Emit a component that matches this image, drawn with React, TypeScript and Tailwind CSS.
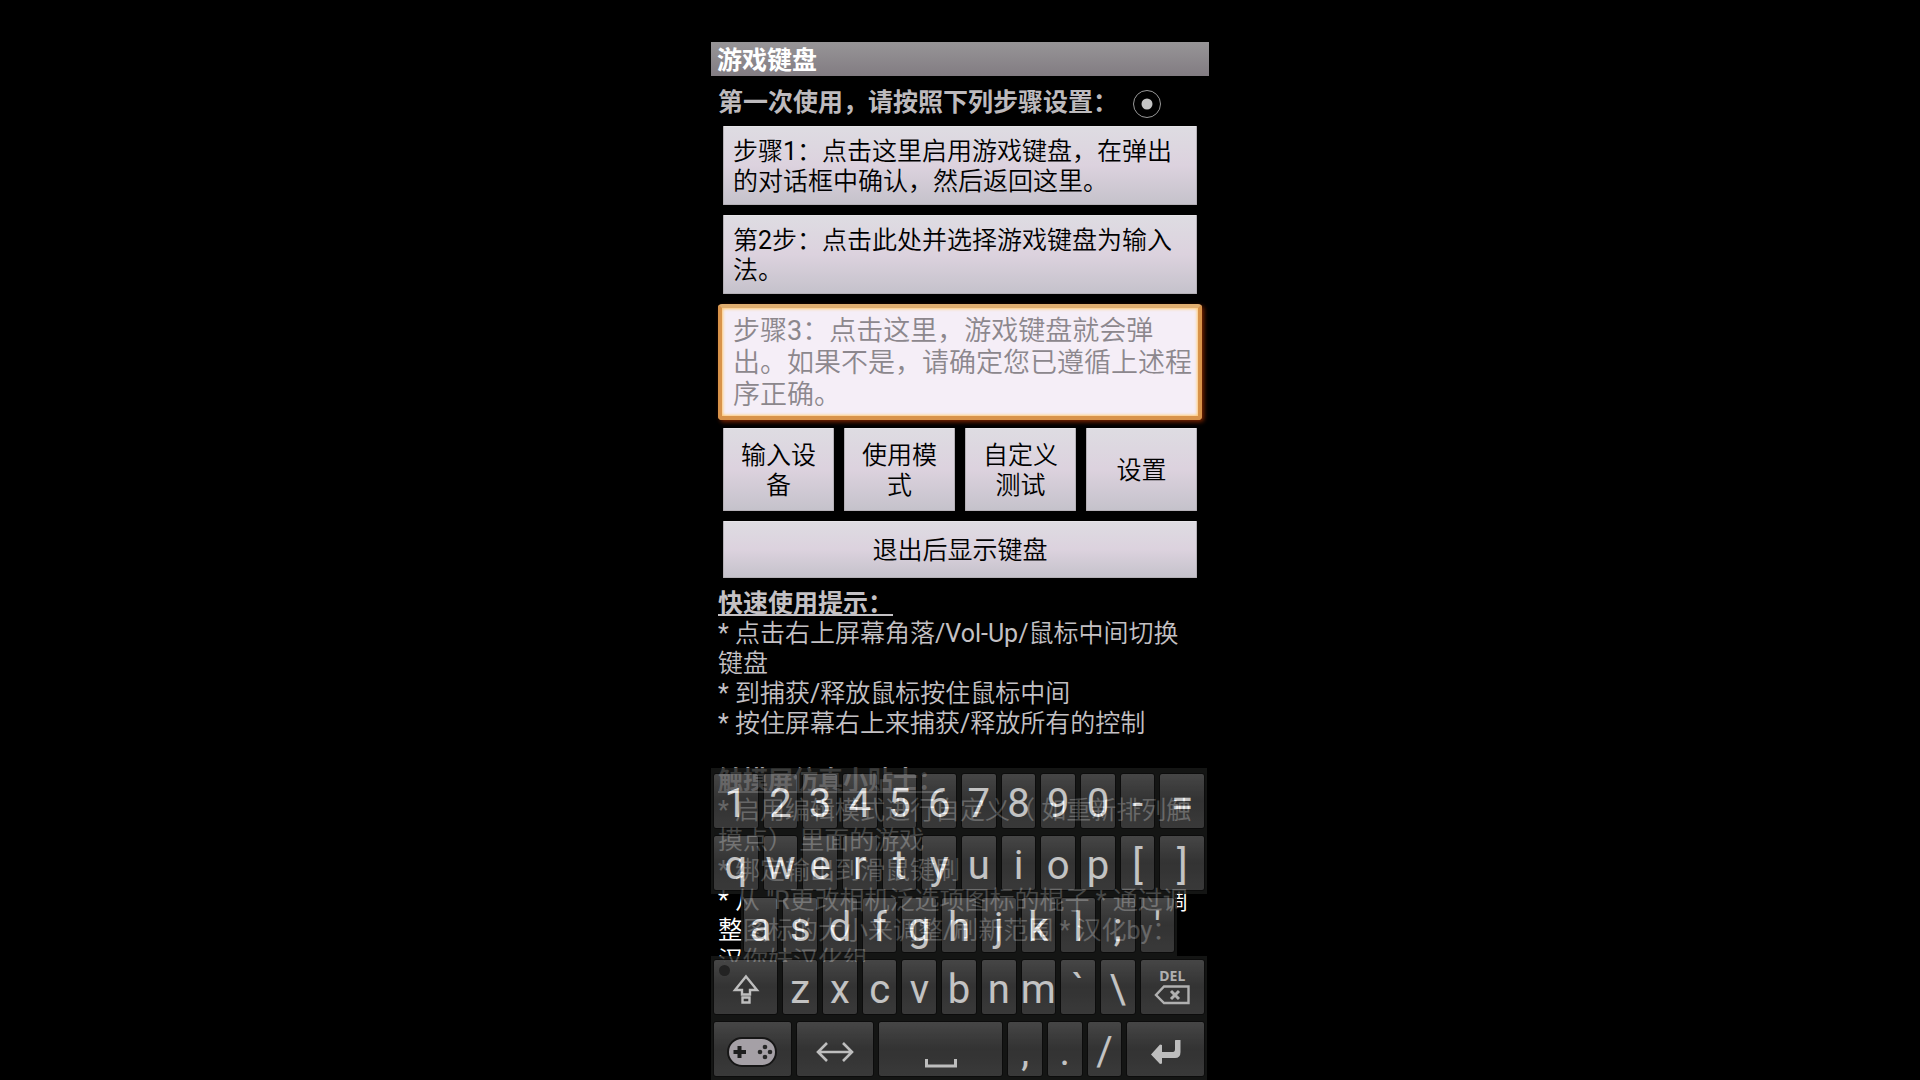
import { ReactNode } from 'react';

const FACE = "font-['Roboto','Noto_Sans_CJK_SC_DemiLight','Noto_Sans_CJK_SC',sans-serif]";
const HEADING = "font-['Roboto','Noto_Sans_CJK_SC',sans-serif] font-bold";

const PANEL_BUTTON =
  'rounded-[1px] border border-[#b4b0b6] border-t-[#e6e4e8] bg-linear-to-b from-[#dedce2] via-[#dcd2de] to-[#c5c2cb] px-[9px] pt-[3px] text-[25px] leading-[30px] text-black';

const DIGITS = '1234567890-='.split('');
const TOP_ROW = 'qwertyuiop[]'.split('');
const HOME_ROW = "asdfghjkl;'".split('');
const BOTTOM_ROW = 'zxcvbnm`\\'.split('');
const PUNCTUATION = [',', '.', '/'];

function Key({ label, children }: { label?: string; children: ReactNode }) {
  return (
    <button
      type="button"
      aria-label={label}
      className="relative mx-[2px] flex h-[56px] min-w-0 items-center justify-center rounded-[3px] border border-[#101010] bg-linear-to-b from-[#585858] via-[#404040] to-[#484848] pt-[5px] text-[40px] leading-[48px] text-[#f4f4f4]"
    >
      {children}
    </button>
  );
}

function ShiftIcon() {
  return (
    <svg width="28" height="32" viewBox="0 0 28 32" fill="none" stroke="#eee" strokeWidth="2.400">
      <path d="M14 2.500 L25 16 H18 V20.500 H10 V16 H3 Z" />
      <path d="M10.500 23.500 H17.500 V28.500 H10.500 Z" />
    </svg>
  );
}

function GamepadIcon() {
  return (
    <svg width="50" height="30" viewBox="0 0 50 30">
      <rect x="1" y="1" width="48" height="28" rx="14" fill="#cfc9d0" stroke="#1c1c1c" strokeWidth="2" />
      <path d="M10.500 9 H14.500 V13 H19 V17 H14.500 V21 H10.500 V17 H6.500 V13 H10.500 Z" fill="#262626" />
      <circle cx="38" cy="10" r="2.300" fill="#333" />
      <circle cx="38" cy="20" r="2.300" fill="#333" />
      <circle cx="33" cy="15" r="2.300" fill="#333" />
      <circle cx="43" cy="15" r="2.300" fill="#333" />
    </svg>
  );
}

function ArrowsIcon() {
  return (
    <svg width="38" height="20" viewBox="0 0 38 20" fill="none" stroke="#eee" strokeWidth="2.600">
      <path d="M2 10 H36 M11 1 L2 10 L11 19 M27 1 L36 10 L27 19" />
    </svg>
  );
}

function SpaceIcon() {
  return (
    <svg className="mt-[24px]" width="32" height="9" viewBox="0 0 32 9" fill="none" stroke="#eee" strokeWidth="3">
      <path d="M1.500 0 V7 H30.500 V0" />
    </svg>
  );
}

function DeleteIcon() {
  return (
    <svg width="36" height="20" viewBox="0 0 36 20" fill="none" stroke="#ddd" strokeWidth="2.400">
      <path d="M10 1.500 H34.500 V18 H10 L2 10 Z" />
      <path d="M17 6 L25 14 M25 6 L17 14" strokeWidth="3" />
    </svg>
  );
}

function EnterIcon() {
  return (
    <svg width="32" height="28" viewBox="0 0 32 28">
      <path d="M25.500 2 H30.500 V14 Q30.500 20 25 20 H12 V25.500 L10 26 L1 16.500 L10 6.500 L12 7 V14 H23 Q25 14 25 11 V2.500 Z" fill="#eee" />
    </svg>
  );
}

function Keyboard() {
  return (
    <div className="absolute bottom-0 left-0 w-[496px] opacity-80">
      <div className="grid grid-cols-[5fr_repeat(10,4fr)_5fr] bg-[#1a1b1a] pt-[5px] pb-[3px]">
        {DIGITS.map(c => <Key key={c}>{c}</Key>)}
      </div>
      <div className="grid grid-cols-[5fr_repeat(10,4fr)_5fr] bg-[#1a1b1a] py-[3px]">
        {TOP_ROW.map(c => <Key key={c}>{c}</Key>)}
      </div>
      <div className="mx-[6%] grid grid-cols-[repeat(11,4fr)] bg-[#1a1b1a] py-[3px]">
        {HOME_ROW.map(c => <Key key={c}>{c}</Key>)}
      </div>
      <div className="grid grid-cols-[7fr_repeat(9,4fr)_7fr] bg-[#1a1b1a] py-[3px]">
        <Key label="Shift">
          <span className="absolute top-[5px] left-[5px] size-[11px] rounded-full bg-[#2c2c2c]" />
          <ShiftIcon />
        </Key>
        {BOTTOM_ROW.map(c => <Key key={c}>{c}</Key>)}
        <Key label="Delete">
          <span className="flex flex-col items-center gap-[2px] pb-[6px]">
            <span className="font-['Noto_Sans',sans-serif] text-[14px] leading-[14px] font-bold text-[#ddd]">DEL</span>
            <DeleteIcon />
          </span>
        </Key>
      </div>
      <div className="grid grid-cols-[25fr_25fr_39fr_12fr_12fr_12fr_25fr] bg-[#1a1b1a] py-[3px]">
        <Key label="Gamepad"><GamepadIcon /></Key>
        <Key label="Arrows"><ArrowsIcon /></Key>
        <Key label="Space"><SpaceIcon /></Key>
        {PUNCTUATION.map(c => <Key key={c}>{c}</Key>)}
        <Key label="Enter"><EnterIcon /></Key>
      </div>
    </div>
  );
}

function Tips() {
  return (
    <div className="px-[7px] pt-[11px] text-[25px] leading-[30px] text-[#c4c1c4]">
      <h2 className={`underline ${HEADING}`}>快速使用提示：</h2>
      <p>* 点击右上屏幕角落/Vol-Up/鼠标中间切换键盘</p>
      <p>* 到捕获/释放鼠标按住鼠标中间</p>
      <p>* 按住屏幕右上来捕获/释放所有的控制</p>
      <h2 className={`mt-[27px] underline ${HEADING}`}>触摸屏仿真小贴士：</h2>
      <div className="text-white">
        <p>* 启用编辑模式进行自定义（ 如重新排列触摸点） 里面的游戏</p>
        <p>* 绑定输出到滑鼠键刷</p>
        <p>
          * 从 "R更改相机泛选项图标的棍子 * 通过调整图标的大小来调整/刷新范围 * 汉化by：汉你妹汉化组
        </p>
      </div>
    </div>
  );
}

export default function App() {
  return (
    <div className={`flex h-screen justify-center overflow-hidden bg-black ${FACE}`}>
      <div className="relative h-full w-[498px]">
        <main className="h-[962px] overflow-hidden pt-[42px]">
          <h1 className={`h-[34px] bg-linear-to-b from-[#979597] to-[#827c82] pt-[4px] pl-[6px] text-[25px] leading-[30px] text-white ${HEADING}`}>
            游戏键盘
          </h1>
          <div className={`flex h-[50px] items-center gap-[14px] pt-[3px] pl-[7px] text-[25px] leading-[30px] text-[#bdbabd] ${HEADING}`}>
            <p>第一次使用，请按照下列步骤设置：</p>
            <svg width="30" height="30" viewBox="0 0 30 30" aria-hidden="true">
              <circle cx="15" cy="16" r="13.500" fill="none" stroke="#999" />
              <circle cx="15" cy="16" r="5.500" fill="#c4c4c4" />
            </svg>
          </div>
          <div className="flex flex-col gap-[10px] px-[12px]">
            <button type="button" className={`h-[79px] text-left ${PANEL_BUTTON}`}>
              步骤1：点击这里启用游戏键盘，在弹出的对话框中确认，然后返回这里。
            </button>
            <button type="button" className={`h-[79px] text-left ${PANEL_BUTTON}`}>
              第2步：点击此处并选择游戏键盘为输入法。
            </button>
            <textarea
              aria-label="测试输入"
              className="-mx-[5px] -mb-[2px] block h-[116px] resize-none overflow-hidden rounded-[4px] border-4 border-[#d8934a] border-t-[#dfae70] bg-[#f5eef7] pt-[7px] pb-[5px] pl-[11px] text-[27px] leading-[32px] shadow-[inset_0_0_3px_1px_#ffc870,2px_2px_4px_#7a2400] outline-none placeholder:text-[#8c878d]"
              placeholder="步骤3：点击这里，游戏键盘就会弹出。如果不是，请确定您已遵循上述程序正确。"
            />
            <div className="grid h-[83px] grid-cols-4 gap-[10px]">
              <button type="button" className={PANEL_BUTTON}>输入设备</button>
              <button type="button" className={PANEL_BUTTON}>使用模式</button>
              <button type="button" className={PANEL_BUTTON}>自定义测试</button>
              <button type="button" className={PANEL_BUTTON}>设置</button>
            </div>
            <button type="button" className={`h-[57px] ${PANEL_BUTTON}`}>退出后显示键盘</button>
          </div>
          <Tips />
        </main>
        <Keyboard />
      </div>
    </div>
  );
}
